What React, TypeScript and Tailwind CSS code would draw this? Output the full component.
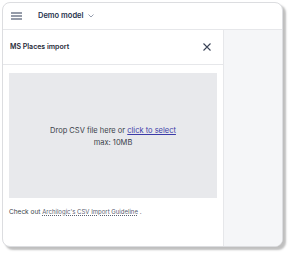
import React from "react";

const App = () => {
  return (
    <div className="w-[290px] h-[255px] bg-white pt-[2px] pl-[2px] font-['Inter',sans-serif]">
      <div className="w-[281px] h-[245px] rounded-[8px] border border-[#dcdde0] shadow-[3px_3px_2px_rgba(0,0,0,0.25)] flex flex-col overflow-hidden bg-white">
        <div className="h-[27px] shrink-0 flex items-center border-b border-[#e6e7ea] pl-[8px]">
          <svg width="11" height="8" viewBox="0 0 11 8" className="text-[#2f3a55]">
            <path d="M0 1h11M0 4h11M0 7h11" stroke="currentColor" strokeWidth="1.2" />
          </svg>
          <span className="ml-[16px] text-[7.5px] font-semibold text-[#26324d]">Demo model</span>
          <svg width="6" height="4" viewBox="0 0 6 4" className="ml-[5px]">
            <path d="M0.5 0.5L3 3L5.5 0.5" fill="none" stroke="#8a93a6" strokeWidth="0.9" />
          </svg>
        </div>
        <div className="flex flex-1">
          <div className="w-[221px] flex flex-col border-r border-[#e6e7ea]">
            <div className="h-[35px] shrink-0 flex items-center justify-between pl-[7px] pr-[12px] border-b border-[#e6e7ea]">
              <span className="text-[7px] font-semibold text-[#1f2937]">MS Places import</span>
              <svg width="8" height="8" viewBox="0 0 8 8">
                <path d="M0.5 0.5L7.5 7.5M7.5 0.5L0.5 7.5" stroke="#3b4458" strokeWidth="1.1" />
              </svg>
            </div>
            <div className="px-[6px] pt-[8px]">
              <div className="h-[125px] bg-[#e8e9ec] flex flex-col items-center justify-center text-[7.5px] text-[#3a3f4a] leading-[12px] pt-[2px]">
                <div>
                  Drop CSV file here or <span className="text-[#3b3ba8] underline">click to select</span>
                </div>
                <div>max: 10MB</div>
              </div>
            </div>
            <div className="px-[6px] pt-[9px] text-[6.5px] text-[#3a3f4a]">
              Check out <span className="text-[#5a6070] underline decoration-dotted text-[6px]">Archilogic's CSV Import Guideline</span> .
            </div>
          </div>
          <div className="flex-1 bg-[#f5f6f8]"></div>
        </div>
      </div>
    </div>
  );
};

export default App;
